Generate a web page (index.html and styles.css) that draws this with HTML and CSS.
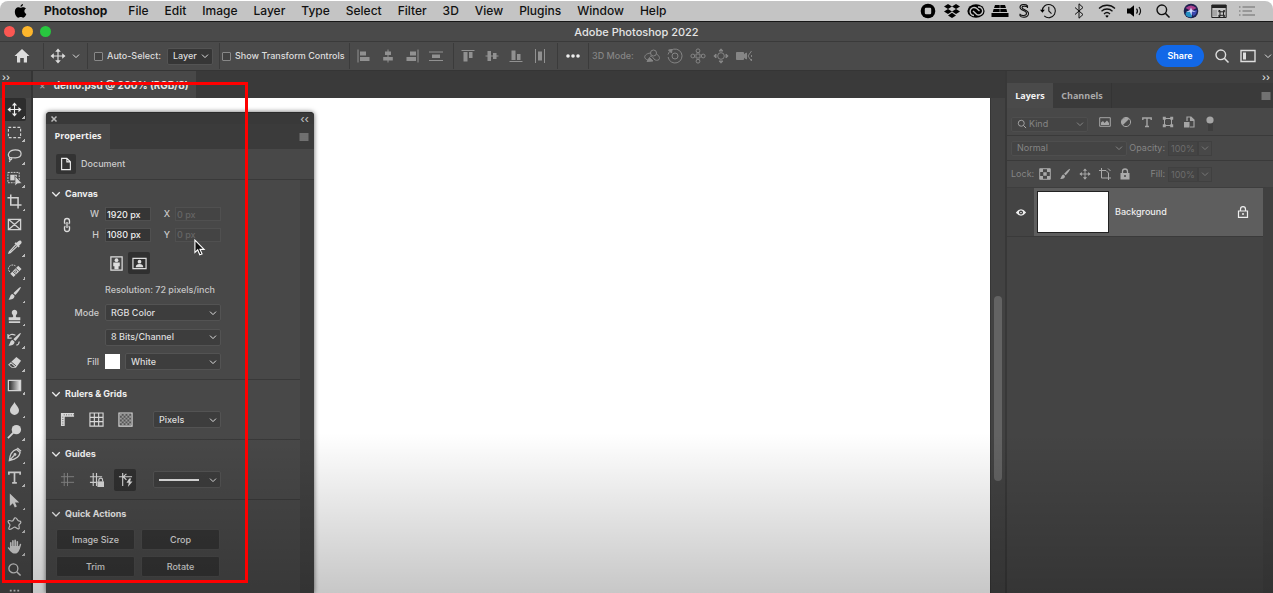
FILE: index.html
```html
<!DOCTYPE html>
<html lang="en">
<head>
<meta charset="utf-8">
<title>Adobe Photoshop 2022</title>
<link rel="stylesheet" href="styles.css">
</head>
<body>
<svg class="defs" aria-hidden="true">
  <symbol id="chev" viewBox="0 0 8 8"><path d="M1 2.600 4 5.600l3-3" fill="none" stroke="currentColor"/></symbol>
  <symbol id="move" viewBox="0 0 16 16"><path d="M8 2v12M2 8h12" stroke="currentColor" stroke-width="1.200"/><path d="M8 .5 10.800 3.800H5.200zM8 15.500 5.200 12.200h5.600zM.5 8 3.800 5.200v5.600zM15.500 8 12.200 10.800V5.200z" fill="currentColor"/></symbol>
  <symbol id="search" viewBox="0 0 16 16"><circle cx="6.800" cy="6.800" r="4.800" fill="none" stroke="currentColor" stroke-width="1.400"/><path d="m10.300 10.300 4.200 4.200" stroke="currentColor" stroke-width="1.600"/></symbol>
  <symbol id="menu" viewBox="0 0 10 10"><path d="M.5 2h9M.5 4h9M.5 6h9M.5 8h9" stroke="currentColor"/></symbol>
  <symbol id="lock" viewBox="0 0 12 12"><path d="M3.500 6V3.500a2.500 2.500 0 0 1 5 0V6" fill="none" stroke="currentColor" stroke-width="1.300"/><path d="M1.500 5h9v6.500h-9z" fill="currentColor"/><circle cx="6" cy="8" r="1" fill="#444"/></symbol>
  <symbol id="brush" viewBox="0 0 16 16"><path d="M14.800 1c.5.5-3 6-6 8.600L6.800 7.800C9.400 4.600 14.200.5 14.800 1zM6 8.600l2 1.900c.2 2.600-2.600 4.500-6.500 4 2-1.500 1.500-5.500 4.500-5.900z" fill="currentColor"/></symbol>
</svg>

<header class="menubar">
  <svg class="apple" viewBox="0 0 14 16"><path d="M9.700 0c.1 1.500-1.200 3-2.700 3C6.800 1.600 8.200.2 9.700 0zM7 4c.7 0 1.600-.7 3-.7 1.200 0 2.200.6 2.900 1.500-2.500 1.500-2.100 4.700.4 5.800-.6 1.700-2 4-3.400 4-1 0-1.400-.6-2.600-.6s-1.600.6-2.600.6C3 14.600.9 11.300.9 8.200c0-3 1.900-4.700 3.700-4.700C5.700 3.500 6.500 4 7 4z"/></svg>
  <nav class="menus">
    <a class="app" href="#">Photoshop</a><a href="#">File</a><a href="#">Edit</a><a href="#">Image</a><a href="#">Layer</a><a href="#">Type</a><a href="#">Select</a><a href="#">Filter</a><a href="#">3D</a><a href="#">View</a><a href="#">Plugins</a><a href="#">Window</a><a href="#">Help</a>
  </nav>
  <div class="status near">
    <svg viewBox="0 0 16 16"><circle cx="8" cy="8" r="7.300"/><rect x="4.800" y="4.800" width="6.400" height="6.400" rx="1.200" fill="#c4c4c4"/></svg>
    <svg viewBox="0 0 16 16"><path d="m4 1 4 2.500L4 6 0 3.500zM12 1l4 2.500L12 6 8 3.500zM4 6l4 2.500L4 11 0 8.500zM12 6l4 2.500-4 2.500-4-2.500zM8 9.800l4 2.600L8 15l-4-2.600z"/></svg>
    <svg class="wide" viewBox="0 0 18 16"><ellipse cx="9" cy="8" rx="8.600" ry="6.800"/><path d="M7 12.500a4 4 0 1 1 2.500-7.200l3 2.800M11 4a4 4 0 1 1-1.500 7.300L6 8" fill="none" stroke="#c4c4c4" stroke-width="1.400"/></svg>
    <svg class="wide" viewBox="0 0 18 16"><path d="M4 2h4.700v3H3zM9.300 2H14l1 3H9.300zM2.600 6h6.100v3H1.800zM9.300 6h6.100l.8 3H9.300zM.5 10h17v4H.5z"/></svg>
    <svg viewBox="0 0 16 16"><path d="M11.500 5V2.800C10 1 4 .8 4 4.300 4 8 10.500 7 10.500 10.300c0 3-5 2.700-6.500 1M11.500 4C10 2.800 6 2.600 6 4.500c0 2.500 6.500 2 6.500 6 0 4.500-7 4.500-8.500 2.300v-2" fill="none" stroke="#111" stroke-width="1.100"/></svg>
    <svg viewBox="0 0 16 16"><path d="M2.200 8a6.600 6.600 0 1 1 2 4.800M8.800 3.800V8l2.700 2.600" fill="none" stroke="#111" stroke-width="1.100"/><path d="M0 6.800h4.800L2.400 9.800z"/></svg>
  </div>
  <div class="status far">
    <svg viewBox="0 0 16 16"><path d="m4 4.500 8 7-4 3.700V.8l4 3.700-8 7" fill="none" stroke="#111"/></svg>
    <svg class="wide" viewBox="0 0 18 16"><path d="M1 5.500a11.500 11.500 0 0 1 16 0M3.500 8.200a8 8 0 0 1 11 0M6 10.900a4.400 4.400 0 0 1 6 0" fill="none" stroke="#111" stroke-width="1.300"/><path d="m9 14.800-1.800-2a3 3 0 0 1 3.600 0z"/></svg>
    <svg viewBox="0 0 16 16"><path d="M0 5.500h3l4-3.200v11.400l-4-3.200H0z"/><path d="M9.500 5.500a4 4 0 0 1 0 5M12 4a6.500 6.500 0 0 1 0 8" fill="none" stroke="#111" stroke-width="1.200"/></svg>
    <svg viewBox="0 0 16 16" color="#111"><use href="#search"/></svg>
    <svg viewBox="0 0 16 16"><circle cx="8" cy="8" r="7.300" fill="#1b1f4d"/><path d="M2.500 5q5.500-5 11 0L8 8z" fill="#a83f8d"/><path d="M3 12.500Q1 8 8 8l1 6q-4 1-6-1.500z" fill="#2490c4"/><path d="m8 8 6-1q0 5-4 6z" fill="#3b48b0"/><path d="M8 4.500 9 7l4 2-4-.4L8.500 13 7 8.800 3 9l4-2z" fill="#d5dcff"/></svg>
    <svg viewBox="0 0 16 16"><path d="M.8 2h14.400v12.500H.8z" fill="none" stroke="#222"/><path d="M.8 2h14.400v3H.8z" fill="#222"/><path d="M3 7v6M5 7v6" stroke="#888"/><path d="M9 8.800h3.500v3.500H9zM9 8.800H7.800V7.500H9zM12.500 8.800V7.500h1.200v1.300zM9 12.300v1.200H7.800v-1.200zM12.500 12.300h1.200v1.200h-1.200z" fill="none" stroke="#222"/></svg>
    <svg viewBox="0 0 16 16"><path d="M0 4h1.500M3.500 4H16M0 8h1.500M3.500 8H13M0 12h1.500M3.500 12H16" stroke="#888" stroke-width="1.400"/></svg>
  </div>
</header>

<div class="titlebar">
  <div class="lights"><button class="light red" aria-label="Close"></button><button class="light yellow" aria-label="Minimise"></button><button class="light green" aria-label="Zoom"></button></div>
  <h1>Adobe Photoshop 2022</h1>
</div>

<div class="options">
  <button class="home" aria-label="Home"><svg viewBox="0 0 16 16"><path d="m8 1 7.500 7H13v6.500H9.800V10H6.200v4.500H3V8H.5z" fill="currentColor"/></svg></button>
  <div class="group tool-now"><svg class="i16" viewBox="0 0 16 16"><use href="#move"/></svg><svg class="i8" viewBox="0 0 8 8"><use href="#chev"/></svg></div>
  <div class="group auto">
    <label><input type="checkbox">Auto-Select:</label>
    <span class="select dark"><select aria-label="Auto-select target"><option>Layer</option></select><svg viewBox="0 0 8 8"><use href="#chev"/></svg></span>
  </div>
  <div class="group transform"><label><input type="checkbox">Show Transform Controls</label></div>
  <div class="group aligns">
    <svg viewBox="0 0 16 16"><path d="M2 1.500v13" stroke="currentColor"/><path d="M4 3.500h6v4H4zM4 9h9.500v4H4z" fill="currentColor"/></svg>
    <svg viewBox="0 0 16 16"><path d="M8 1.500v13" stroke="currentColor"/><path d="M5 3.500h6v3.500H5zM3.200 9h9.600v3.500H3.200z" fill="currentColor"/></svg>
    <svg viewBox="0 0 16 16"><path d="M14 1.500v13" stroke="currentColor"/><path d="M6 3.500h6v4H6zM2.500 9H12v4H2.500z" fill="currentColor"/></svg>
    <svg viewBox="0 0 16 16"><path d="M1 4h14M1 12.500h14" stroke="currentColor"/><path d="M4 6.500h8v3.500H4z" fill="currentColor"/></svg>
  </div>
  <div class="group aligns">
    <svg viewBox="0 0 16 16"><path d="M1.500 2.500h13" stroke="currentColor"/><path d="M3.500 4h4v9.500h-4zM9 4h3.500v6H9z" fill="currentColor"/></svg>
    <svg viewBox="0 0 16 16"><path d="M1.500 8h13" stroke="currentColor"/><path d="M3.500 3h3.500v10H3.500zM9 5h3.500v6H9z" fill="currentColor"/></svg>
    <svg viewBox="0 0 16 16"><path d="M1.500 13.500h13" stroke="currentColor"/><path d="M3.500 2.500h4V12h-4zM9 6h3.500v6H9z" fill="currentColor"/></svg>
    <svg viewBox="0 0 16 16"><path d="M3.500 1v14M12.500 1v14" stroke="currentColor"/><path d="M6 3.500h4v9H6z" fill="currentColor"/></svg>
  </div>
  <div class="group more"><button aria-label="More options"><svg viewBox="0 0 16 6"><circle cx="3" cy="3" r="1.800"/><circle cx="8" cy="3" r="1.800"/><circle cx="13" cy="3" r="1.800"/></svg></button></div>
  <div class="group mode3d"><span>3D Mode:</span>
    <svg viewBox="0 0 16 16"><circle cx="9.500" cy="5" r="3"/><path d="M6.500 5C2 5.500 0 8 1 10c.5 1.200 2 2 3.500 2M12.500 6c2.500 1.500 3.700 4 2.500 5.500-1.200 1.300-4 1-5-.5C9 9.500 8.500 8.500 6 8"/><path d="m3 13.500 6-.5-3.500-3.500z" fill="currentColor"/></svg>
    <svg viewBox="0 0 16 16"><circle cx="8" cy="8" r="3"/><path d="M4 2.300A7 7 0 1 1 1.100 9M1 6.500l1.500-3"/><path d="M1.500 2 5 1.500 4.500 5z" fill="currentColor"/></svg>
    <svg viewBox="0 0 16 16"><circle cx="8" cy="2.800" r="1.900"/><circle cx="8" cy="13.200" r="1.900"/><circle cx="2.800" cy="8" r="1.900"/><circle cx="13.200" cy="8" r="1.900"/><path d="M7 4.500V7H4.500M9 4.500V7h2.500M7 11.500V9H4.500M9 11.500V9h2.500"/></svg>
    <svg viewBox="0 0 16 16"><circle cx="8" cy="8" r="3.300"/><path d="M8 .8 10 3H6zM.8 8 3 6v4zM15.200 8 13 6v4zM8 15.200 6 13h4z" fill="currentColor"/></svg>
    <svg viewBox="0 0 16 16"><path d="M.5 4.500h7v7h-7zM7.500 7 10.500 5v6L7.500 9z" fill="currentColor"/><path d="m15.500 3-3.500 5 3.500 5v-2M15.500 7v2"/></svg>
  </div>
  <div class="right-tools"><button class="share">Share</button><svg class="i16" viewBox="0 0 16 16"><use href="#search"/></svg><svg class="i16" viewBox="0 0 16 16"><path d="M1 2.500h14v11H1z" fill="none" stroke="currentColor" stroke-width="1.400"/><path d="M3 4.500h3v7H3z" fill="currentColor"/></svg><svg class="i8" viewBox="0 0 8 8"><use href="#chev"/></svg></div>
</div>

<main class="workspace">
  <aside class="tools">
    <div class="expand">››</div>
    <button class="on" aria-label="Move"><svg viewBox="0 0 16 16"><use href="#move"/></svg></button>
    <button aria-label="Marquee"><svg viewBox="0 0 16 16"><path d="M1.500 2.500h13v11h-13z" fill="none" stroke="currentColor" stroke-width="1.200" stroke-dasharray="3 1.800"/></svg></button>
    <button aria-label="Lasso"><svg viewBox="0 0 16 16"><path d="M4 11C-1 8 2 2 9 2c8 0 8 8 0 8.500-3 .2-7-1-6.500 1 .5 1.800 3 .8 2.500-.6M3.500 12.500 2.500 15" fill="none" stroke="currentColor" stroke-width="1.300"/></svg></button>
    <button aria-label="Object selection"><svg viewBox="0 0 16 16"><path d="M1 1.500h12v11H1z" fill="none" stroke="currentColor" stroke-dasharray="2 1"/><path d="M3.500 4h7v6h-7z" fill="currentColor"/><path d="M8.500 5v11l2.500-2.300 5-.4z" fill="currentColor" stroke="#474747" stroke-width=".8"/></svg></button>
    <button aria-label="Crop"><svg viewBox="0 0 16 16"><path d="M4 .5v11.300h11.500M.5 4h11.300v11.500" fill="none" stroke="currentColor" stroke-width="1.600"/></svg></button>
    <button class="single" aria-label="Frame"><svg viewBox="0 0 16 16"><path d="M1.500 2.500h13v11h-13zM1.500 2.500l13 11M14.500 2.500l-13 11" fill="none" stroke="currentColor" stroke-width="1.400"/></svg></button>
    <button aria-label="Eyedropper"><svg viewBox="0 0 16 16"><path d="M15 1c1.500 1.500.2 3-2 4.800l.5 1-1.200 1.200-4.300-4.300L9.200 2.500l1 .5C12 1 13.500-.3 15 1z" fill="currentColor"/><path d="m9.500 5-7 7.500L2 14l1.500-.5L11 6.500" fill="none" stroke="currentColor" stroke-width="1.300"/></svg></button>
    <button aria-label="Healing brush"><svg viewBox="0 0 16 16"><path d="m3.500 11.500 8.500-8.500 3.500 3.500L7 15z" fill="currentColor"/><path d="m6 9 3.500 3.500M9.500 5.500 13 9" stroke="#444"/><path d="M7.800 9h1M9.500 9h1M9 7.600h1M9 10.400h1" stroke="#444"/><path d="M3 9.500C-1 5 4 0 9 3" fill="none" stroke="currentColor" stroke-dasharray="2 1"/></svg></button>
    <button aria-label="Brush"><svg viewBox="0 0 16 16"><use href="#brush"/></svg></button>
    <button aria-label="Clone stamp"><svg viewBox="0 0 16 16"><path d="M8 .8a3 3 0 0 1 2 5.200c-.8 1-.8 2 0 2.800h4.200V12H1.800V8.800H6c.8-.8.8-1.800 0-2.800A3 3 0 0 1 8 .8zM2 13h12v1.800H2z" fill="currentColor"/></svg></button>
    <button aria-label="History brush"><svg viewBox="0 0 16 16"><use href="#brush"/><path d="M1 6c1-4 5-4 8-2.500M1 2v4.500h4M10 14c2-.5 3-2 3-4" fill="none" stroke="currentColor" stroke-width="1.200"/></svg></button>
    <button aria-label="Eraser"><svg viewBox="0 0 16 16"><path d="m10 2 5 4-5.500 7.500H5L1.200 10.300z" fill="currentColor"/><path d="m4.500 7.500 5 4" stroke="#444"/><path d="m2.500 10.300 3 2.400h3l-4-3.300z" fill="#444"/></svg></button>
    <button aria-label="Gradient"><svg viewBox="0 0 16 16"><linearGradient id="fade"><stop offset="0" stop-color="#222"/><stop offset="1" stop-color="#eee"/></linearGradient><path d="M1.500 2.500h13v11h-13z" fill="url(#fade)" stroke="currentColor" stroke-width="1.400"/></svg></button>
    <button aria-label="Blur"><svg viewBox="0 0 16 16"><path d="M8 1c1.500 3.500 4.800 5.800 4.800 9a4.800 4.800 0 0 1-9.600 0C3.200 6.800 6.500 4.500 8 1z" fill="currentColor"/></svg></button>
    <button aria-label="Dodge"><svg viewBox="0 0 16 16"><circle cx="10" cy="6" r="5" fill="currentColor"/><path d="m7 9-6 6" stroke="currentColor" stroke-width="2"/></svg></button>
    <button aria-label="Pen"><svg viewBox="0 0 16 16"><path d="M10 2.500 14 6c-1 4-3 6.500-11.500 8.500C3 9 5 4 10 2.500zM11 1l4 3.500M2.500 14.500l5-5.500" fill="none" stroke="currentColor" stroke-width="1.400"/><circle cx="8.500" cy="8" r="1.500" fill="currentColor"/></svg></button>
    <button aria-label="Type"><svg viewBox="0 0 16 16"><path d="M2 5V2.500h12V5M8 2.500v11M5.500 13.800h5" fill="none" stroke="currentColor" stroke-width="1.800"/></svg></button>
    <button aria-label="Path selection"><svg viewBox="0 0 16 16"><path d="M3 .5v13.300l3.300-3 2 4.700 2.200-1-2-4.500H13z" fill="currentColor"/></svg></button>
    <button aria-label="Custom shape"><svg viewBox="0 0 16 16"><path d="M8.500 2c1.800-1 2.500 3 4 3.200 3 .3 3 2 .5 3.800-1.500 1 1.500 4-.5 4.700-2 .6-3-2.700-5-1.700-2 1-4 3.200-5.500 2-1-1 2-3.500 1-5C2 8 .5 6 1.500 5c1-.8 3 .8 4.300.3C7 5 7 3 8.500 2z" fill="none" stroke="currentColor" stroke-width="1.300"/></svg></button>
    <button aria-label="Hand"><svg viewBox="0 0 16 16"><path d="M4 9V4M6.300 8V2M8.700 8V1.500M11 8V3M13 10l1.300-4" stroke="currentColor" stroke-width="1.700" stroke-linecap="round"/><path d="M3.200 7.500h9l1.600.5c0 4-2 7.500-5 7.500C5 15.500 3 12.500.8 9.500c0-1.200 1.500-.8 2.400.5z" fill="currentColor"/></svg></button>
    <button class="single" aria-label="Zoom"><svg viewBox="0 0 16 16"><use href="#search"/></svg></button>
    <button class="single" aria-label="Edit toolbar"><svg viewBox="0 0 16 16"><path d="M3 6h10" stroke="currentColor" stroke-width="2" stroke-dasharray="2"/></svg></button>
  </aside>

  <section class="document">
    <div class="doc-tabs"><div class="doc-tab"><span class="x">×</span><span>demo.psd @ 200% (RGB/8)</span></div></div>
    <div class="stage">
      <div class="canvas"></div>
      <div class="scroll"><div class="thumb"></div></div>

      <section class="props">
        <div class="props-top"><svg class="i8" viewBox="0 0 8 8"><path d="m1.500 1.500 5 5M6.500 1.500l-5 5" stroke="currentColor" stroke-width="1.500"/></svg><span>‹‹</span></div>
        <div class="props-tabs"><h2>Properties</h2><svg class="i10" viewBox="0 0 10 10"><use href="#menu"/></svg></div>
        <div class="doc-row"><span class="doc-icon"><svg viewBox="0 0 16 16"><path d="M3 1.500h6l4 4v9H3zM9 1.500v4h4" fill="none" stroke="currentColor" stroke-width="1.300"/></svg></span>Document</div>
        <div class="props-body">
          <div class="props-main">
            <div class="sect">
              <h3><svg class="i10" viewBox="0 0 8 8"><use href="#chev"/></svg>Canvas</h3>
              <div class="fields">
                <svg class="link" viewBox="0 0 12 16"><path d="M3.500 6.500V4a2.500 2.500 0 0 1 5 0v2.500M3.500 9.500V12a2.500 2.500 0 0 0 5 0V9.500M6 5v6M3.500 6.500h1M7.500 6.500h1M3.500 9.500h1M7.500 9.500h1" fill="none" stroke="currentColor" stroke-width="1.300"/></svg>
                <label for="w">W</label><div class="pair"><input id="w" value="1920 px"><label for="x">X</label><input id="x" value="0 px" disabled></div>
                <label for="h">H</label><div class="pair"><input id="h" value="1080 px"><label for="y">Y</label><input id="y" value="0 px" disabled></div>
                <div class="orient"><button aria-label="Portrait"><svg viewBox="0 0 16 16"><path d="M2 1h12v14H2z" fill="none" stroke="currentColor" stroke-width="1.300"/><circle cx="8" cy="4.500" r="2" fill="currentColor"/><path d="M4.500 7h7v4h-1.300v3H5.800v-3H4.500z" fill="currentColor"/></svg></button><button class="on" aria-label="Landscape"><svg viewBox="0 0 16 16"><path d="M1 2.500h14v11H1z" fill="none" stroke="currentColor" stroke-width="1.300"/><circle cx="8" cy="6" r="2" fill="currentColor"/><path d="M4 12c0-2 1-3.500 4-3.500s4 1.500 4 3.500z" fill="currentColor"/></svg></button></div>
                <div class="res">Resolution: 72 pixels/inch</div>
                <label class="long" for="mode">Mode</label><span class="select"><select id="mode"><option>RGB Color</option></select><svg viewBox="0 0 8 8"><use href="#chev"/></svg></span>
                <span class="select bits"><select aria-label="Bit depth"><option>8 Bits/Channel</option></select><svg viewBox="0 0 8 8"><use href="#chev"/></svg></span>
                <label class="long" for="fill">Fill</label><div class="fill"><button aria-label="Fill colour"></button><span class="select"><select id="fill"><option>White</option></select><svg viewBox="0 0 8 8"><use href="#chev"/></svg></span></div>
              </div>
            </div>
            <div class="sect">
              <h3><svg class="i10" viewBox="0 0 8 8"><use href="#chev"/></svg>Rulers &amp; Grids</h3>
              <div class="iconrow">
                <button aria-label="Rulers"><svg viewBox="0 0 16 16"><path d="M1 1h14v4H5v10H1z" fill="currentColor"/><path d="M4 3h11M3 5v10" stroke="#555" stroke-dasharray="1 1.500"/></svg></button>
                <button aria-label="Grid"><svg viewBox="0 0 16 16"><path d="M1 1h14v14H1zM5.700 1v14M10.300 1v14M1 5.700h14M1 10.300h14" fill="none" stroke="currentColor" stroke-width="1.200"/></svg></button>
                <button aria-label="Transparency grid"><svg viewBox="0 0 16 16"><path d="M1 1h14v14H1z" fill="#555" stroke="currentColor" stroke-width="1.200"/><path d="M2 3h12M4 5h10M2 7h12M4 9h10M2 11h12M4 13h10" stroke="#999" stroke-width="2" stroke-dasharray="2"/></svg></button>
                <span class="select"><select aria-label="Units"><option>Pixels</option></select><svg viewBox="0 0 8 8"><use href="#chev"/></svg></span>
              </div>
            </div>
            <div class="sect">
              <h3><svg class="i10" viewBox="0 0 8 8"><use href="#chev"/></svg>Guides</h3>
              <div class="iconrow">
                <button class="dim" aria-label="Show guides"><svg viewBox="0 0 16 16"><path d="M4.500 1v14M8 1v14M1 5h14M1 11h14" stroke="currentColor"/></svg></button>
                <button aria-label="Lock guides"><svg viewBox="0 0 16 16"><path d="M4.500 1v14M8 1v14M1 5h13M1 11h8" stroke="currentColor" stroke-width="1.200"/><path d="M9 10h7v6H9z" fill="currentColor"/><path d="M10.500 10V8.500a2 2 0 0 1 4 0V10" fill="none" stroke="currentColor" stroke-width="1.200"/></svg></button>
                <button class="on" aria-label="Smart guides"><svg viewBox="0 0 16 16"><path d="M5 1v14M1 5h14M9 2 5.500 5 9 8.500" fill="none" stroke="currentColor" stroke-width="1.200"/><path d="m12 7-3 4.500h2.500L10.500 16l5-6h-2.700l1.200-3z" fill="currentColor"/></svg></button>
                <button class="select line" aria-label="Guide style"><span></span><svg viewBox="0 0 8 8"><use href="#chev"/></svg></button>
              </div>
            </div>
            <div class="sect">
              <h3><svg class="i10" viewBox="0 0 8 8"><use href="#chev"/></svg>Quick Actions</h3>
              <div class="actions"><button>Image Size</button><button>Crop</button><button>Trim</button><button>Rotate</button></div>
            </div>
          </div>
          <div class="props-scroll"></div>
        </div>
      </section>
    </div>
  </section>

  <aside class="dock">
    <div class="dock-top">››</div>
    <div class="dock-tabs"><button class="on">Layers</button><button>Channels</button><svg class="i10" viewBox="0 0 10 10"><use href="#menu"/></svg></div>
    <div class="row filter">
      <span class="select kind"><svg viewBox="0 0 16 16"><use href="#search"/></svg><select aria-label="Filter kind"><option>Kind</option></select><svg viewBox="0 0 8 8"><use href="#chev"/></svg></span>
      <div class="filters">
        <svg viewBox="0 0 12 12"><path d="M.7 1.700h10.600v8.600H.7z" fill="none" stroke="currentColor"/><path d="M2 9V6.500L4 5l1.500 2L8 4.500 10 7v2z" fill="currentColor"/></svg>
        <svg viewBox="0 0 12 12"><circle cx="6" cy="6" r="4.600" fill="none" stroke="currentColor"/><path d="M9.300 2.700a4.700 4.700 0 0 0-6.600 6.600z" fill="currentColor"/></svg>
        <svg viewBox="0 0 12 12"><path d="M1.800 4V2h8.400v2M6 2v8.500M4 10.500h4" fill="none" stroke="currentColor" stroke-width="1.400"/></svg>
        <svg viewBox="0 0 12 12"><path d="M2.500 2.500h7v7h-7z" fill="none" stroke="currentColor"/><path d="M.8.8h3v3h-3zM8.200.8h3v3h-3zM.8 8.200h3v3h-3zM8.200 8.200h3v3h-3z" fill="currentColor"/></svg>
        <svg viewBox="0 0 12 12"><path d="M4 5V1h4l3 3v7H7" fill="none" stroke="currentColor" stroke-width="1.200"/><path d="M1 6h5.500v5.500H1zM7 1h1l3 3v1H7z" fill="currentColor"/></svg>
        <svg viewBox="0 0 12 16"><path d="M4 6h5v9H4z" fill="#3e3e3e"/><circle cx="6" cy="4" r="3.600" fill="currentColor"/></svg>
      </div>
    </div>
    <div class="row blend">
      <span class="select"><select aria-label="Blend mode"><option>Normal</option></select><svg viewBox="0 0 8 8"><use href="#chev"/></svg></span>
      <label for="opacity">Opacity:</label><input id="opacity" value="100%"><button class="step" aria-label="Opacity slider"><svg viewBox="0 0 8 8"><use href="#chev"/></svg></button>
    </div>
    <div class="row locks">
      <span class="lock-label">Lock:</span>
      <div class="lock-icons">
        <svg viewBox="0 0 12 12"><path d="M.7.7h10.600v10.600H.7z" fill="none" stroke="currentColor"/><path d="M1 1h3v3H1zM8 1h3v3H8zM4.300 4.300h3.400v3.400H4.300zM1 8h3v3H1zM8 8h3v3H8z" fill="currentColor"/></svg>
        <svg viewBox="0 0 16 16"><use href="#brush"/></svg>
        <svg viewBox="0 0 16 16"><use href="#move"/></svg>
        <svg viewBox="0 0 12 12"><path d="M2.500 0v10H12M0 2.500h7L9.500 5v7M9 .5l2.500 2.500" fill="none" stroke="currentColor"/></svg>
        <svg viewBox="0 0 12 12"><use href="#lock"/></svg>
      </div>
      <label for="lfill">Fill:</label><input id="lfill" value="100%"><button class="step" aria-label="Fill slider"><svg viewBox="0 0 8 8"><use href="#chev"/></svg></button>
    </div>
    <div class="layers">
      <div class="layer">
        <button class="eye" aria-label="Layer visibility"><svg viewBox="0 0 14 10"><path d="M1 5q6-7.500 12 0-6 7.500-12 0z" fill="currentColor"/><circle cx="7" cy="5" r="2.300" fill="#333"/><circle cx="7" cy="5" r="1" fill="#ddd"/></svg></button>
        <div class="layer-row"><span class="preview"></span><span class="name">Background</span><svg viewBox="0 0 12 12"><path d="M3.500 5V3.200a2.500 2.500 0 0 1 5 0V5M1.500 5h9v6.300h-9z" fill="none" stroke="currentColor" stroke-width="1.200"/><circle cx="6" cy="8" r="1" fill="currentColor"/></svg></div>
      </div>
    </div>
  </aside>
</main>
<div class="fade"></div>
<div class="marker"></div>
<svg class="cursor" viewBox="0 0 12 18"><path d="M1 1v13.500l3-3L6.300 17l2.500-1-2.300-5H11z" fill="#111" stroke="#fff" stroke-width="1.200"/></svg>
</body>
</html>
```
FILE: styles.css
```css
* { box-sizing: border-box; }
html, body { height: 100%; }
body { margin: 0; padding-top: 1px; background: #fff; display: flex; flex-direction: column; overflow: hidden; font: 500 9px/12px Inter, "Liberation Sans", sans-serif; color: #ddd; }
button, input, select { font: inherit; color: inherit; margin: 0; padding: 0; border: 0; background: none; }
button { display: flex; align-items: center; justify-content: center; }
h1, h2, h3 { margin: 0; font: inherit; }
svg { flex: none; display: block; overflow: visible; }
.defs { position: absolute; width: 0; height: 0; }
.i8 { width: 8px; height: 8px; }
.i10 { width: 10px; height: 10px; }
.i16 { width: 16px; height: 16px; }

.menubar { flex: none; height: 21px; display: flex; align-items: center; background: #c4c4c4; border-bottom: 1px solid #161616; border-radius: 8px 8px 0 0; color: #111; padding: 0 12px 0 14px; }
.apple { width: 13px; height: 15px; }
.menus { flex: 1; display: flex; gap: 16px; margin-left: 17px; font-size: 12px; line-height: 18px; white-space: nowrap; }
.menus a { color: inherit; text-decoration: none; }
.menus .app { font-weight: 700; margin-right: 5px; }
.status { display: grid; grid-auto-flow: column; justify-items: center; }
.status svg { width: 16px; height: 16px; }
.status .wide { width: 18px; }
.near { grid-auto-columns: 24px; margin-right: 5px; }
.far { grid-auto-columns: 28px; }

.titlebar { flex: none; height: 20px; display: grid; grid-template-columns: 1fr auto 1fr; align-items: center; background: #4a4a4a; border-bottom: 1px solid #3a3a3a; }
.titlebar h1 { font-size: 11px; line-height: 18px; color: #e4e4e4; }
.lights { display: flex; gap: 7px; padding-left: 4px; }
.light { width: 11px; height: 11px; border-radius: 50%; }
.red { background: #fb5752; }
.yellow { background: #fdb62c; }
.green { background: #28c73f; }

.options { flex: none; height: 29px; display: flex; align-items: center; background: #4a4a4a; border-bottom: 1px solid #353535; white-space: nowrap; }
.home { width: 43px; }
.home svg { width: 16px; height: 16px; }
.group { height: 26px; display: flex; align-items: center; border-left: 1px solid #3b3b3b; }
.group label { display: flex; align-items: center; gap: 4px; }
.group input { appearance: none; width: 9px; height: 9px; border: 1px solid #888; border-radius: 1px; background: #414141; }
.tool-now { width: 44px; padding-left: 6px; gap: 6px; }
.auto { width: 132px; padding-left: 6px; gap: 6px; }
.transform { width: 130px; padding-left: 2px; }
.aligns { width: 104px; padding-left: 6px; gap: 8px; color: #919191; }
.aligns svg { width: 16px; height: 16px; }
.more { width: 31px; padding-left: 7px; }
.more svg { width: 16px; height: 6px; fill: #eee; }
.mode3d { padding-left: 3px; gap: 7px; color: #858585; }
.mode3d span { width: 45px; }
.mode3d svg { width: 16px; height: 16px; fill: none; stroke: currentColor; }
.right-tools { margin-left: auto; display: flex; align-items: center; gap: 10px; padding-right: 1px; }
.right-tools .i8 { margin-left: -2px; }
.share { width: 48px; height: 22px; border-radius: 11px; background: #1268e8; color: #fff; font-weight: 600; }

.select { display: grid; grid-template-columns: 1fr 11px; align-items: center; height: 17px; border: 1px solid #535353; border-radius: 2px; background: #3d3d3d; }
.select select { appearance: none; grid-area: 1 / 1 / 2 / 3; min-width: 0; width: 100%; height: 100%; padding-left: 5px; outline: 0; }
.select svg { grid-area: 1 / 2; width: 8px; height: 8px; pointer-events: none; }
.dark { flex: 1; margin-right: 6px; background: #363636; }

.workspace { flex: 1; min-height: 0; display: flex; background: #3a3a3a; }
.tools { flex: none; width: 33px; background: #474747; border-right: 2px solid #353535; overflow: hidden; }
.expand { height: 27px; padding-left: 2px; line-height: 12px; background: #414141; font-size: 10px; }
.tools button { position: relative; width: 24px; height: 23px; margin-left: 2px; color: #d2d2d2; border-radius: 2px; }
.tools button svg { width: 15px; height: 15px; }
.tools .on { background: #2d2d2d; color: #eee; }
.tools button::after { content: ""; position: absolute; right: 1px; bottom: 2px; width: 3px; height: 3px; background: linear-gradient(135deg, transparent 50%, #bbb 50%); }
.tools .single::after { display: none; }

.document { flex: 1; min-width: 0; display: flex; flex-direction: column; }
.doc-tabs { flex: none; height: 27px; display: flex; background: #3a3a3a; }
.doc-tab { width: 163px; display: flex; align-items: center; gap: 8px; padding-left: 6px; background: #484848; font-size: 10px; font-weight: 700; color: #e6e6e6; white-space: nowrap; }
.x { font-weight: 400; color: #aaa; }
.stage { position: relative; flex: 1; min-height: 0; display: flex; }
.canvas { flex: 1; background: #fff; }
.scroll { width: 15px; padding: 198px 3px 0; background: #424242; border-left: 1px solid #363636; }
.thumb { height: 185px; border-radius: 5px; background: #636363; }

.props { position: absolute; left: 13px; top: 14px; bottom: 0; width: 268px; display: flex; flex-direction: column; background: #484848; border-radius: 4px 4px 0 0; box-shadow: 0 0 5px rgba(0, 0, 0, .6); }
.props-top { flex: none; height: 12px; display: flex; align-items: center; justify-content: space-between; padding: 0 5px 0 4px; background: #393939; border-top: 1px solid #2c2c2c; border-radius: 4px 4px 0 0; color: #bbb; font-size: 11px; }
.props-tabs { flex: none; height: 25px; display: flex; align-items: center; justify-content: space-between; padding-right: 5px; background: #3b3b3b; color: #a5a5a5; }
.props-tabs h2 { width: 64px; height: 25px; line-height: 24px; text-align: center; background: #484848; color: #f0f0f0; font-family: "Open Sans", sans-serif; font-weight: 700; font-size: 9px; }
.doc-row { flex: none; height: 31px; display: flex; align-items: center; gap: 5px; padding-left: 10px; border-bottom: 1px solid #393939; color: #ccc; }
.doc-icon { padding: 3px; background: #333; border-radius: 2px; color: #eee; }
.doc-icon svg { width: 14px; height: 14px; }
.props-body { flex: 1; min-height: 0; display: flex; overflow: hidden; }
.props-main { flex: 1; }
.props-scroll { width: 14px; background: #414141; }
.sect { padding: 2px 10px 4px; border-bottom: 1px solid #393939; }
.sect:last-child { border: 0; }
.sect h3 { height: 22px; display: flex; align-items: center; gap: 4px; margin-left: -5px; padding-top: 2px; font-weight: 700; color: #eee; }
.fields { display: grid; grid-template-columns: 22px 15px 116px; grid-template-rows: 20px 21px 36px 18px 27px 22px 27px; column-gap: 6px; align-items: center; }
.fields > label { grid-column: 2; text-align: right; color: #ccc; }
.fields > .long { grid-column: 1 / 3; }
.link { grid-row: 1 / 3; width: 12px; height: 16px; justify-self: center; }
.pair, .orient, .res, .fields > .select, .fill { grid-column: 3; }
.pair { display: grid; grid-template-columns: 46px 24px 46px; align-items: center; }
.pair label { text-align: right; padding-right: 5px; color: #ccc; }
.pair input { min-width: 0; height: 14px; padding-left: 1px; background: #353535; border: 1px solid #505050; color: #f0f0f0; }
.pair input:disabled { background: #444; color: #666; }
.orient { display: flex; gap: 1px; }
.orient button { width: 22px; height: 22px; border-radius: 2px; color: #ddd; }
.orient svg { width: 15px; height: 15px; }
.orient .on, .iconrow .on { background: #303030; }
.res { color: #c6c6c6; white-space: nowrap; }
.fill { display: flex; align-items: center; gap: 5px; }
.fill button { width: 15px; height: 15px; background: #fff; }
.fill .select { flex: 1; }
.iconrow { height: 31px; display: flex; align-items: center; gap: 7px; }
.iconrow > button:not(.select) { width: 22px; height: 22px; color: #d8d8d8; border-radius: 2px; }
.iconrow button:not(.select) svg { width: 15px; height: 15px; }
.iconrow > .dim:not(.select) { color: #888; }
.iconrow .select { width: 68px; margin-left: 10px; }
.line span { height: 2px; margin-left: 5px; margin-right: 10px; background: #ddd; }
.actions { display: grid; grid-template-columns: 79px 79px; gap: 6px; padding-top: 5px; }
.actions button { height: 21px; background: #353535; border: 1px solid #4b4b4b; border-radius: 2px; color: #ddd; }

.dock { flex: none; width: 268px; display: flex; flex-direction: column; background: #444; border-left: 2px solid #383838; }
.dock-top { height: 12px; padding-right: 3px; text-align: right; background: #3f3f3f; font-size: 10px; }
.dock-tabs { height: 25px; display: flex; align-items: center; background: #3a3a3a; font-family: "Open Sans", sans-serif; font-weight: 700; color: #aaa; }
.dock-tabs button { height: 25px; width: 59px; border-right: 1px solid #343434; }
.dock-tabs .on { width: 46px; background: #4a4a4a; color: #f4f4f4; border: 0; }
.dock-tabs svg { margin-left: auto; margin-right: 2px; }
.row { flex: none; height: 26px; display: flex; align-items: center; padding-left: 4px; background: #484848; border-bottom: 1px solid #3a3a3a; color: #858585; font-weight: 400; }
.row .select { height: 15px; background: #444; border-color: #4e4e4e; }
.filter { height: 28px; padding-top: 5px; }
.filter .kind { width: 77px; grid-template-columns: 16px 1fr 11px; }
.kind select { grid-area: 1 / 2 / 2 / 4; padding-left: 1px; }
.kind svg:first-child { grid-area: 1 / 1; width: 10px; height: 10px; margin-left: 5px; color: #aaa; }
.kind svg:last-child { grid-area: 1 / 3; }
.filters { display: grid; grid-template-columns: repeat(6, 21px); justify-items: center; margin-left: 6px; color: #a5a5a5; }
.filters svg { width: 12px; height: 12px; }
.filters svg:last-child { height: 16px; }
.blend { height: 25px; }
.blend .select { width: 116px; }
.row label { width: 41px; padding-right: 3px; text-align: right; }
.row input { width: 30px; height: 15px; padding-left: 2px; background: #444; border: 1px solid #404040; color: #6c6c6c; }
.step { width: 14px; height: 15px; border: 1px solid #404040; color: #777; }
.step svg { width: 8px; height: 8px; }
.locks { border: 0; height: 26px; }
.row.locks label { width: 34px; }
.lock-label { width: 24px; }
.lock-icons { display: grid; grid-template-columns: repeat(5, 20px); margin-right: -1px; justify-items: center; color: #aaa; }
.lock-icons svg { width: 12px; height: 12px; }
.layers { flex: 1; border-top: 1px solid #3e3e3e; border-right: 10px solid #404040; }
.layer { height: 49px; display: flex; border-bottom: 1px solid #3a3a3a; }
.eye { width: 27px; color: #eee; }
.eye svg { width: 12px; height: 9px; }
.layer-row { flex: 1; display: flex; align-items: center; padding-left: 3px; padding-right: 14px; background: #5e5e5e; color: #eee; }
.preview { width: 72px; height: 42px; margin-right: 6px; background: #fff; border: 1px solid #222; }
.name { flex: 1; }
.layer-row svg { width: 12px; height: 12px; }

.fade { position: absolute; left: 0; right: 0; bottom: 0; height: 160px; background: linear-gradient(rgba(0, 0, 0, 0), rgba(0, 0, 0, .22)); pointer-events: none; }
.marker { position: absolute; left: 2px; top: 82px; width: 246px; height: 501px; border: 3px solid #f00; pointer-events: none; }
.cursor { position: absolute; left: 194px; top: 239px; width: 11px; height: 17px; pointer-events: none; }
```
